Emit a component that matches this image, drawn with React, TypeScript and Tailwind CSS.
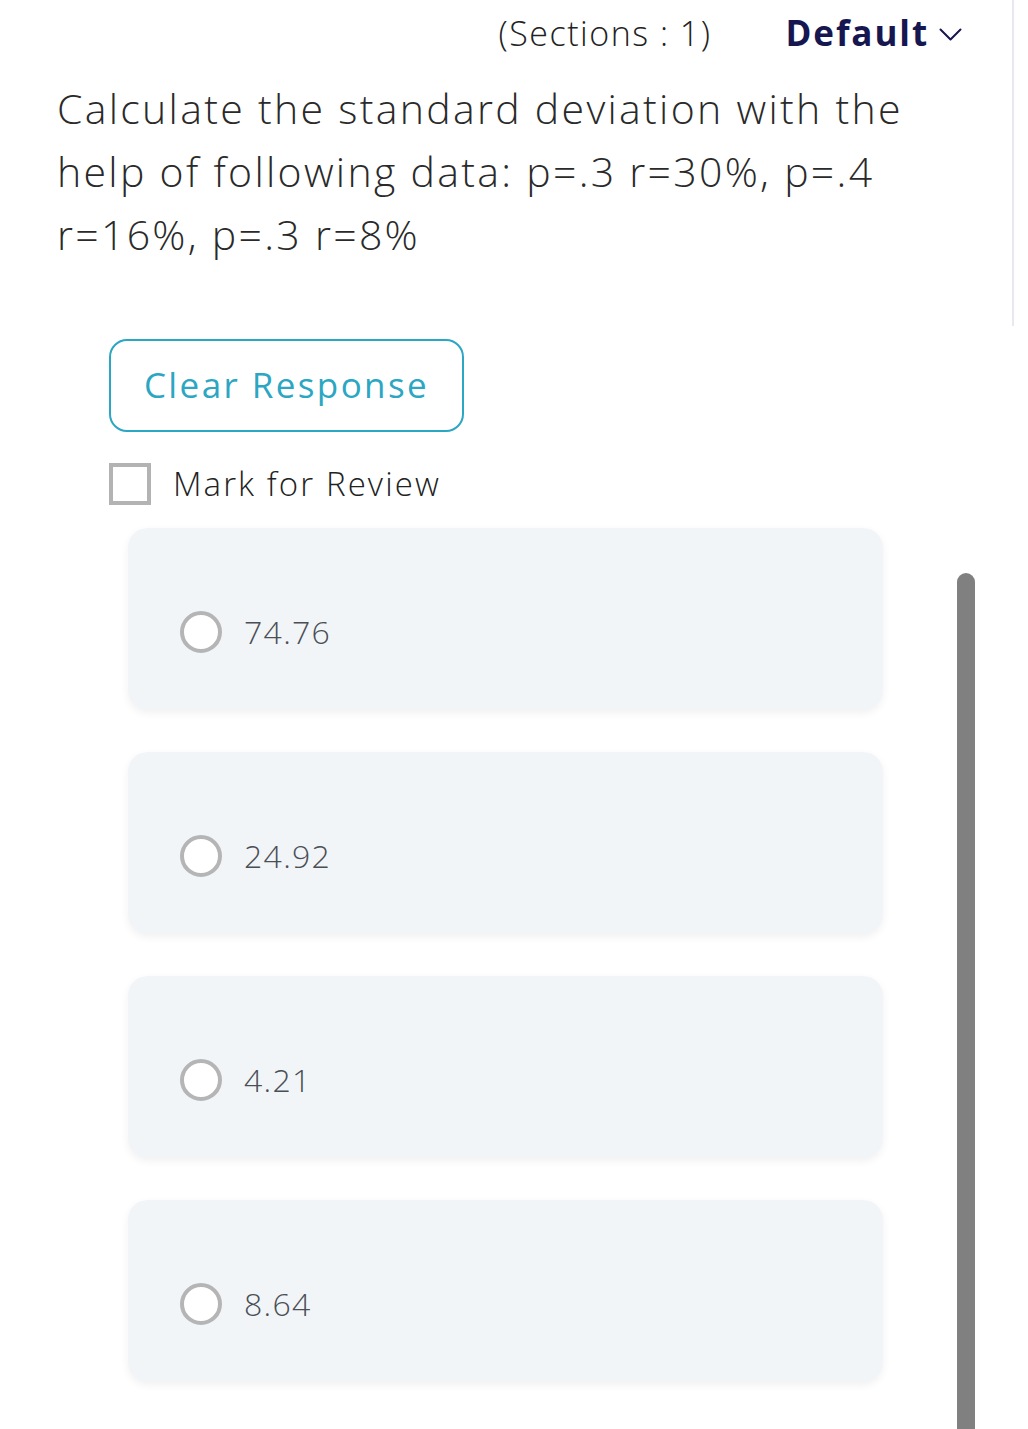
const options = ["74.76", "24.92", "4.21", "8.64"]

const font = { fontFamily: '"Open Sans", "DejaVu Sans", sans-serif' }

function Option({ label }: { label: string }) {
  return (
    <div className="flex h-[182px] w-[755px] items-center gap-[22px] rounded-[20px] bg-[#f2f5f8] pl-[52px] pt-[26px] shadow-[0_3px_8px_rgba(0,0,0,0.06)]">
      <span className="h-[42px] w-[42px] rounded-full border-4 border-[#b5b5b5] bg-white" />
      <span className="text-[32px] font-light tracking-[1.3px] text-[#4a4f55]">{label}</span>
    </div>
  )
}

export default function App() {
  return (
    <div className="relative min-h-[1429px] bg-white" style={font}>
      <div className="h-[326px] w-[1014px] border-r-2 border-[#e8e8f0]">
        <div className="flex h-[66px] items-center justify-end pr-[50px]">
          <span className="text-[34px] font-light tracking-[1.5px] text-[#222]">(Sections : 1)</span>
          <span className="ml-[74px] text-[35px] font-bold tracking-[1.9px] text-[#161650]">Default</span>
          <svg className="ml-[10px] mt-[4px]" width="23" height="14" viewBox="0 0 23 14" fill="none">
            <polyline points="1.5,1.5 11.5,11.5 21.5,1.5" stroke="#161650" strokeWidth="2" strokeLinecap="round" strokeLinejoin="round" />
          </svg>
        </div>
        <p className="mt-[11px] pl-[57px] pr-[80px] text-[41px] font-light leading-[63px] tracking-[2.3px] text-[#2a2a2a]">
          Calculate the standard deviation with the help of following data: p=.3 r=30%, p=.4 r=16%, p=.3 r=8%
        </p>
      </div>

      <button className="ml-[109px] mt-[13px] flex h-[93px] w-[355px] items-center justify-center rounded-[18px] border-2 border-[#2ba6c3] text-[35px] font-medium tracking-[2.4px] text-[#2ba6c3]">
        Clear Response
      </button>

      <div className="ml-[109px] mt-[27px] flex items-center gap-[22px]">
        <span className="h-[42px] w-[42px] border-4 border-[#b3b3b3] bg-white" />
        <span className="text-[33px] font-light tracking-[2.1px] text-[#222]">Mark for Review</span>
      </div>

      <div className="ml-[128px] mt-[19px] flex flex-col gap-[42px] pb-[40px]">
        {options.map((o) => (
          <Option key={o} label={o} />
        ))}
      </div>

      <div className="absolute left-[957px] top-[573px] bottom-0 w-[18px] rounded-t-full bg-[#808080]" />
    </div>
  )
}
